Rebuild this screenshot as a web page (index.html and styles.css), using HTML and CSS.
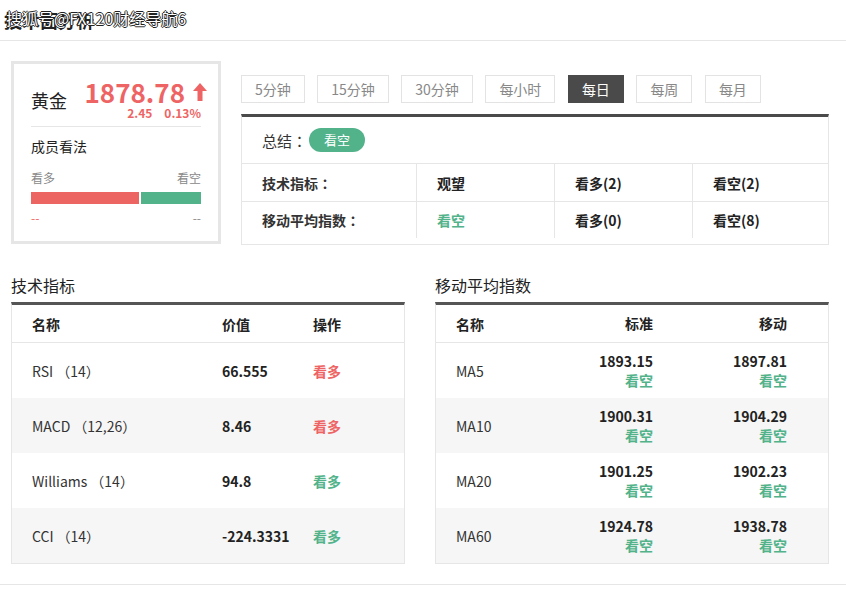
FILE: index.html
```html
<!DOCTYPE html>
<html lang="zh-CN">
<head>
    <meta charset="UTF-8">
    <title>技术面分析</title>
    <link rel="stylesheet" href="styles.css">
</head>
<body>
    <div class="page-head">
        <h2>技术面分析</h2>
        <span class="watermark">搜狐号@FX120财经导航6</span>
    </div>

    <div class="top">
        <div class="quote-card">
            <div class="quote-row">
                <span class="quote-name">黄金</span>
                <div class="quote-price">
                    <div class="price">1878.78
                        <svg class="arrow" width="14" height="18" viewBox="0 0 14 18"><path d="M7 0 L14 8 L9.5 8 L9.5 18 L4.5 18 L4.5 8 L0 8 Z" fill="#ee6464"/></svg>
                    </div>
                    <div class="change"><span>2.45</span><span>0.13%</span></div>
                </div>
            </div>
            <div class="opinion-title">成员看法</div>
            <div class="opinion-labels"><span>看多</span><span>看空</span></div>
            <div class="opinion-bar">
                <div class="bar-up"></div>
                <div class="bar-down"></div>
            </div>
            <div class="opinion-count"><span class="up">--</span><span>--</span></div>
        </div>

        <div class="trend">
            <div class="periods">
                <button class="period">5分钟</button>
                <button class="period">15分钟</button>
                <button class="period">30分钟</button>
                <button class="period">每小时</button>
                <button class="period active">每日</button>
                <button class="period">每周</button>
                <button class="period">每月</button>
            </div>
            <div class="summary">
                <div class="summary-head"><span lang="zh-TW" class="punct">总结：</span><span class="badge">看空</span></div>
                <div class="summary-row">
                    <div class="cell label punct" lang="zh-TW">技术指标：</div>
                    <div class="cell strong">观望</div>
                    <div class="cell strong">看多(2)</div>
                    <div class="cell strong">看空(2)</div>
                </div>
                <div class="summary-row">
                    <div class="cell label punct" lang="zh-TW">移动平均指数：</div>
                    <div class="cell green">看空</div>
                    <div class="cell strong">看多(0)</div>
                    <div class="cell strong">看空(8)</div>
                </div>
            </div>
        </div>
    </div>

    <div class="bottom">
        <div class="panel">
            <h3>技术指标</h3>
            <div class="grid-table ind">
                <div class="tr th"><span>名称</span><span>价值</span><span>操作</span></div>
                <div class="tr"><span>RSI<span class="args punct" lang="zh-TW">（14）</span></span><b>66.555</b><span class="red">看多</span></div>
                <div class="tr alt"><span>MACD<span class="args punct" lang="zh-TW">（12,26）</span></span><b>8.46</b><span class="red">看多</span></div>
                <div class="tr"><span>Williams<span class="args punct" lang="zh-TW">（14）</span></span><b>94.8</b><span class="green">看多</span></div>
                <div class="tr alt"><span>CCI<span class="args punct" lang="zh-TW">（14）</span></span><b>-224.3331</b><span class="green">看多</span></div>
            </div>
        </div>
        <div class="panel">
            <h3>移动平均指数</h3>
            <div class="grid-table ma">
                <div class="tr th"><span>名称</span><span class="num">标准</span><span class="num">移动</span></div>
                <div class="tr"><span>MA5</span><span class="num"><b>1893.15</b><i>看空</i></span><span class="num"><b>1897.81</b><i>看空</i></span></div>
                <div class="tr alt"><span>MA10</span><span class="num"><b>1900.31</b><i>看空</i></span><span class="num"><b>1904.29</b><i>看空</i></span></div>
                <div class="tr"><span>MA20</span><span class="num"><b>1901.25</b><i>看空</i></span><span class="num"><b>1902.23</b><i>看空</i></span></div>
                <div class="tr alt"><span>MA60</span><span class="num"><b>1924.78</b><i>看空</i></span><span class="num"><b>1938.78</b><i>看空</i></span></div>
            </div>
        </div>
    </div>

    <div class="foot-line"></div>
</body>
</html>
```

FILE: styles.css
```css
* {
    box-sizing: border-box;
}

body {
    margin: 0;
    font-family: "Noto Sans CJK SC", "Noto Sans", sans-serif;
    color: #333;
    font-size: 14px;
    background: #fff;
}

/* centred full-width colons and brackets */
.punct {
    font-family: "Noto Sans CJK TC", "Noto Sans CJK SC", sans-serif;
}

.args {
    margin-left: 3px;
}

.page-head {
    position: relative;
    height: 41px;
    border-bottom: 1px solid #e6e6e6;
}

.page-head h2 {
    margin: 0;
    padding: 8px 0 0 4px;
    font-size: 18px;
    line-height: 24px;
    font-weight: bold;
    color: #222;
}

/* watermark over the title */
.watermark {
    position: absolute;
    left: 6px;
    top: 6px;
    font-size: 16px;
    line-height: 24px;
    color: #fff;
    text-shadow: -1px 0 #222, 1px 0 #222, 0 -1px #222, 0 1px #222;
}

.top {
    display: flex;
    gap: 20px;
    padding: 20px 17px 0 11px;
}

.quote-card {
    width: 210px;
    height: 183px;
    border: 3px solid #e6e6e6;
    padding: 0 17px;
    flex-shrink: 0;
}

.quote-row {
    display: flex;
    justify-content: space-between;
    align-items: flex-start;
    height: 63px;
    border-bottom: 1px solid #e6e6e6;
}

.quote-name {
    font-size: 18px;
    margin-top: 23px;
    color: #222;
}

.quote-price {
    margin-right: -6px;
    text-align: right;
}

.price {
    margin-top: 14px;
    font-size: 26px;
    line-height: 28px;
    font-weight: bold;
    color: #ee6464;
    display: flex;
    align-items: center;
    gap: 8px;
}

.change {
    font-size: 12px;
    font-weight: bold;
    color: #ee6464;
    line-height: 14px;
    margin-right: 6px;
    display: flex;
    justify-content: flex-end;
    gap: 12px;
}

.opinion-title {
    margin-top: 9px;
    font-size: 14px;
    line-height: 20px;
    color: #222;
}

.opinion-labels,
.opinion-count {
    display: flex;
    justify-content: space-between;
    font-size: 12px;
    color: #888;
}

.opinion-labels {
    margin-top: 14px;
    line-height: 16px;
}

.opinion-bar {
    display: flex;
    gap: 2px;
    margin-top: 6px;
    height: 12px;
}

.bar-up {
    width: 108px;
    background: #ec6563;
}

.bar-down {
    flex: 1;
    background: #52b38b;
}

.opinion-count {
    margin-top: 6px;
    line-height: 16px;
}

.opinion-count .up {
    color: #ee6464;
}

.trend {
    flex: 1;
}

.periods {
    display: flex;
    gap: 12.5px;
    padding-top: 14px;
}

.period {
    font-family: inherit;
    font-size: 14px;
    color: #888;
    background: #fff;
    border: 1px solid #e3e3e3;
    height: 28px;
    padding: 0 13px;
}

.period.active {
    background: #4a4a4a;
    border-color: #4a4a4a;
    color: #fff;
}

.summary {
    margin-top: 11px;
    border: 1px solid #e6e6e6;
    border-top: 3px solid #4a4a4a;
    padding-bottom: 6px;
}

.summary-head {
    height: 47px;
    display: flex;
    align-items: center;
    padding-left: 20px;
    font-size: 15px;
    color: #333;
    border-bottom: 1px solid #e6e6e6;
}

.badge {
    display: inline-block;
    background: #52b38b;
    color: #fff;
    font-size: 13px;
    height: 24px;
    line-height: 24px;
    padding: 0 15px;
    border-radius: 12px;
    margin-left: 2px;
}

.summary-row {
    display: grid;
    grid-template-columns: 174px 138px 138px 1fr;
    height: 37px;
}

.summary-row + .summary-row {
    border-top: 1px solid #e6e6e6;
}

.cell {
    display: flex;
    align-items: center;
    padding-left: 20px;
    border-left: 1px solid #e6e6e6;
    font-size: 14px;
}

.cell.label {
    border-left: none;
    font-weight: bold;
    color: #333;
}

.cell.strong {
    font-weight: bold;
    color: #222;
}

.cell.green {
    color: #52b38b;
}

.bottom {
    display: flex;
    gap: 30px;
    padding: 29px 17px 0 11px;
}

.panel {
    flex: 1;
}

.panel h3 {
    margin: 0 0 6px;
    font-size: 16px;
    font-weight: normal;
    line-height: 22px;
    color: #222;
}

.grid-table {
    border: 1px solid #e6e6e6;
    border-top: 3px solid #555;
}

.tr {
    display: grid;
    align-items: center;
    height: 55px;
    padding: 0 20px;
}

.tr.alt {
    background: #f6f6f6;
}

.tr.th {
    height: 38px;
    border-bottom: 1px solid #e6e6e6;
    font-weight: bold;
    color: #222;
}

.ind .tr {
    grid-template-columns: 190px 91px 1fr;
}

.ma .tr {
    grid-template-columns: 1fr 100px 134px;
    padding-right: 41px;
}

.tr b {
    color: #222;
}

.num {
    text-align: right;
    display: flex;
    flex-direction: column;
    align-items: flex-end;
    line-height: 19px;
}

.num i {
    font-style: normal;
    font-weight: bold;
    color: #52b38b;
}

.red {
    color: #ee6464;
    font-weight: bold;
}

.green {
    color: #52b38b;
    font-weight: bold;
}

.foot-line {
    margin-top: 20px;
    border-top: 1px solid #e6e6e6;
}
```
